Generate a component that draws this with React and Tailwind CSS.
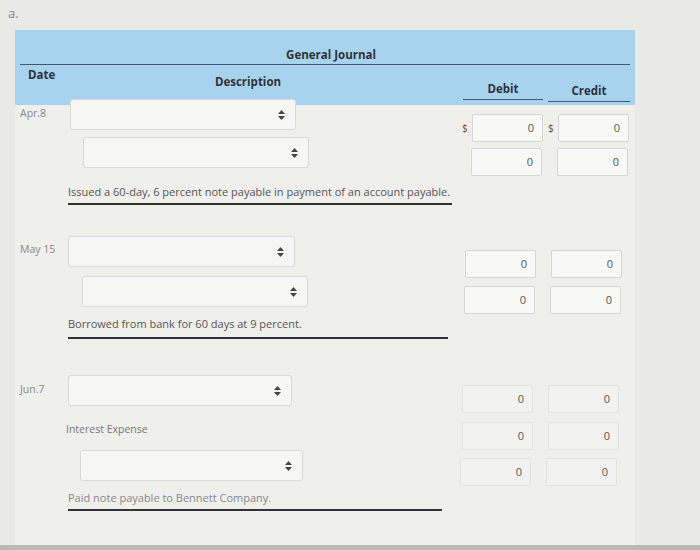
import React from "react";

const font = { fontFamily: '"Open Sans", "Liberation Sans", sans-serif' };

const Select = ({ className = "" }) => (
  <div
    className={`h-[31px] bg-[#f6f6f4] border border-[#d9d9d7] rounded-[3px] flex items-center justify-end pr-[10px] ${className}`}
  >
    <svg width="7" height="10" viewBox="0 0 7 10">
      <path d="M3.5 0 L7 4 L0 4 Z" fill="#444" />
      <path d="M3.5 10 L7 6 L0 6 Z" fill="#444" />
    </svg>
  </div>
);

const Amount = ({ dollar = false, faded = false }) => (
  <div className="flex items-center">
    <span className="w-[10px] text-[10px] text-[#555]">{dollar ? "$" : ""}</span>
    <div
      className={`w-[71px] h-[28px] border rounded-[2px] flex items-center justify-end pr-[8px] text-[11px] text-[#555] ${
        faded ? "bg-[#f2f2f0] border-[#e2e2e0]" : "bg-[#f8f8f6] border-[#d6d6d4]"
      }`}
    >
      0
    </div>
  </div>
);

const AmountRow = ({ dollar, faded, className = "" }) => (
  <div className={`flex gap-[5px] ${className}`}>
    <Amount dollar={dollar} faded={faded} />
    <Amount dollar={dollar} faded={faded} />
  </div>
);

const Desc = ({ text, width, className = "" }) => (
  <div className={`ml-[53px] ${width} border-b-2 border-[#333] text-[11px] leading-[15px] text-[#555] ${className}`}>
    {text}
  </div>
);

export default function App() {
  return (
    <div className="w-[700px] h-[550px] bg-[#e9e9e6] overflow-hidden flex flex-col" style={font}>
      <div className="h-[30px] pl-[8px] pt-[4px] text-[13px] text-[#888]">a.</div>
      <div className="ml-[15px] w-[620px] flex-1 flex flex-col bg-[#efefec]">
        {/* header */}
        <div className="h-[75px] shrink-0 bg-[#a8d3ee] flex flex-col px-[5px]">
          <div className="h-[35px] flex items-end justify-center pb-[1px] border-b border-[#3b5a73] text-[11.5px] font-bold text-[#2e3338] pl-[12px]">
            General Journal
          </div>
          <div className="flex-1 flex text-[11.5px] font-bold text-[#2e3338]">
            <div className="w-[58px] pl-[8px] pt-[1px]">Date</div>
            <div className="w-[340px] text-center pt-[8px]">Description</div>
            <div className="ml-[45px] w-[80px] flex flex-col items-center pt-[15px]">
              <span>Debit</span>
              <div className="mt-[2px] w-[80px] border-b border-[#3b5a73]" />
            </div>
            <div className="ml-[5px] w-[82px] flex flex-col items-center pt-[17px]">
              <span>Credit</span>
              <div className="mt-[2px] w-[82px] border-b border-[#3b5a73]" />
            </div>
          </div>
        </div>

        {/* Apr.8 */}
        <div className="flex flex-col">
          <div className="flex">
            <div className="w-[55px] pl-[5px] pt-[1px] text-[10.5px] text-[#888]">Apr.8</div>
            <Select className="w-[226px] mt-[-6px]" />
            <AmountRow dollar className="ml-[166px] mt-[9px]" />
          </div>
          <div className="flex mt-[-5px]">
            <Select className="ml-[68px] w-[226px]" />
            <AmountRow className="ml-[152px] mt-[11px]" />
          </div>
          <Desc
            text="Issued a 60-day, 6 percent note payable in payment of an account payable."
            width="w-[384px]"
            className="mt-[8px] pb-[4px]"
          />
        </div>

        {/* May 15 */}
        <div className="flex flex-col pt-[31px]">
          <div className="flex">
            <div className="w-[53px] pl-[5px] pt-[6px] text-[10.5px] text-[#888]">May 15</div>
            <Select className="w-[227px]" />
            <AmountRow className="ml-[160px] mt-[14px]" />
          </div>
          <div className="flex mt-[-2px]">
            <Select className="ml-[67px] w-[226px]" />
            <AmountRow className="ml-[146px] mt-[10px]" />
          </div>
          <Desc
            text="Borrowed from bank for 60 days at 9 percent."
            width="w-[380px]"
            className="mt-[2px] pb-[6px]"
          />
        </div>

        {/* Jun.7 */}
        <div className="flex flex-col pt-[36px]">
          <div className="flex">
            <div className="w-[53px] pl-[5px] pt-[7px] text-[10.5px] text-[#888]">Jun.7</div>
            <Select className="w-[224px]" />
            <AmountRow faded className="ml-[160px] mt-[10px]" />
          </div>
          <div className="flex mt-[9px]">
            <div className="ml-[51px] w-[240px] text-[10.5px] leading-[15px] text-[#777]">Interest Expense</div>
            <AmountRow faded className="ml-[146px]" />
          </div>
          <div className="flex">
            <Select className="ml-[65px] w-[223px]" />
            <AmountRow faded className="ml-[147px] mt-[8px]" />
          </div>
          <Desc
            text="Paid note payable to Bennett Company."
            width="w-[374px]"
            className="mt-[4px] pb-[4px] text-[#888]"
          />
        </div>
      </div>
      <div className="h-[5px] bg-[#b9b9b6]" />
    </div>
  );
}
